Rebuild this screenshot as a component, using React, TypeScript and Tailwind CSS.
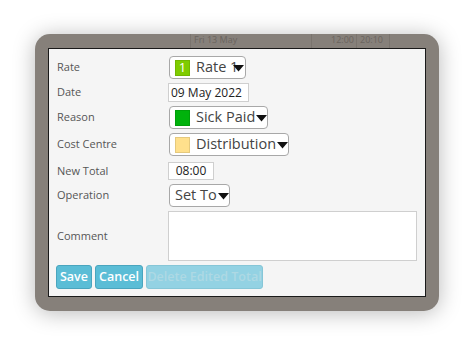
import React from "react";

const Arrow = () => (
  <svg width="11" height="8" viewBox="0 0 11 8" className="shrink-0">
    <path d="M0 1 L11 1 L5.5 7.5 Z" fill="#111" />
  </svg>
);

function Select({ swatch, swatchText, label, width, overlapArrow }: { swatch?: string; swatchText?: string; label: string; width: string; overlapArrow?: boolean }) {
  return (
    <div className={`flex items-center h-[23px] ${width} rounded-[4px] border border-[#a8a8a8] bg-white pl-[5px] pr-[3px]`}>
      {swatch && (
        <div
          className="shrink-0 w-[15px] h-[16px] mr-[6px] flex items-center justify-center text-white text-[13px] leading-none border border-black/10"
          style={{ backgroundColor: swatch }}
        >
          {swatchText}
        </div>
      )}
      <span className="text-[14.5px] text-[#444] leading-none whitespace-nowrap">{label}</span>
      <span className={overlapArrow ? "-ml-[5px]" : "ml-[1px]"}>
        <Arrow />
      </span>
    </div>
  );
}

const Label = ({ children }: { children: React.ReactNode }) => (
  <div className="w-[111px] shrink-0 text-[11px] text-[#555]">{children}</div>
);

export default function App() {
  return (
    <div className="w-[474px] h-[346px] bg-white overflow-hidden" style={{ fontFamily: '"Open Sans", sans-serif' }}>
      <div className="ml-[35px] mt-[34px] w-[404px] h-[277px] rounded-[15px] bg-[#86807a] shadow-[0_2px_22px_rgba(0,0,0,0.28)] overflow-hidden flex flex-col">
        <div className="h-[14px] flex text-[9px] text-[#6a645e] leading-[12px]">
          <div className="w-[156px] border-r border-[#7a746e]" />
          <div className="w-[121px] pl-[3px] border-r border-[#7a746e]">Fri 13 May</div>
          <div className="w-[45px] text-right pr-[2px] border-r border-[#7a746e]">12:00</div>
          <div className="w-[33px] pl-[3px] border-r border-[#7a746e]">20:10</div>
        </div>
        <div className="ml-[13px] w-[378px] h-[249px] border border-[#1a1a1a] bg-[#f5f5f5] pl-[8px] pt-[7px] flex flex-col">
          <div className="flex items-center h-[23px]">
            <Label>Rate</Label>
            <div className="ml-[1px]">
              <Select swatch="#7fcc00" swatchText="1" label="Rate 1" width="w-[77px]" overlapArrow />
            </div>
          </div>
          <div className="flex items-center h-[19px] mt-[4px]">
            <Label>Date</Label>
            <div className="w-[81px] h-[19px] bg-white border border-[#cfcfcf] text-[12px] text-[#222] leading-[17px] pl-[2px]">09 May 2022</div>
          </div>
          <div className="flex items-center h-[23px] mt-[4px]">
            <Label>Reason</Label>
            <div className="ml-[1px]">
              <Select swatch="#00b20c" label="Sick Paid" width="w-[99px]" />
            </div>
          </div>
          <div className="flex items-center h-[23px] mt-[4px]">
            <Label>Cost Centre</Label>
            <div className="ml-[1px]">
              <Select swatch="#ffe08c" label="Distribution" width="w-[120px]" />
            </div>
          </div>
          <div className="flex items-center h-[18px] mt-[6px]">
            <Label>New Total</Label>
            <div className="w-[46px] h-[18px] bg-white border border-[#cfcfcf] text-[12px] text-[#222] leading-[16px] text-center">08:00</div>
          </div>
          <div className="flex items-center h-[23px] mt-[4px]">
            <Label>Operation</Label>
            <div className="ml-[1px]">
              <Select label="Set To" width="w-[61px]" />
            </div>
          </div>
          <div className="flex items-center h-[50px] mt-[4px]">
            <Label>Comment</Label>
            <div className="w-[249px] h-[50px] bg-white border border-[#cfcfcf]" />
          </div>
          <div className="flex items-center h-[24px] mt-[4px] -ml-[1px] gap-[3px]">
            <div className="h-[24px] px-[3px] rounded-[3px] bg-[#5bbdd6] border border-[#4aa5be] text-white text-[12.5px] font-semibold flex items-center">Save</div>
            <div className="h-[24px] px-[3px] rounded-[3px] bg-[#5bbdd6] border border-[#4aa5be] text-white text-[12.5px] font-semibold flex items-center">Cancel</div>
            <div className="h-[24px] w-[117px] justify-center rounded-[3px] bg-[#93d2e3] border border-[#86c6d7] text-[#aed9e4] text-[12.5px] font-semibold flex items-center">Delete Edited Total</div>
          </div>
        </div>
      </div>
    </div>
  );
}
